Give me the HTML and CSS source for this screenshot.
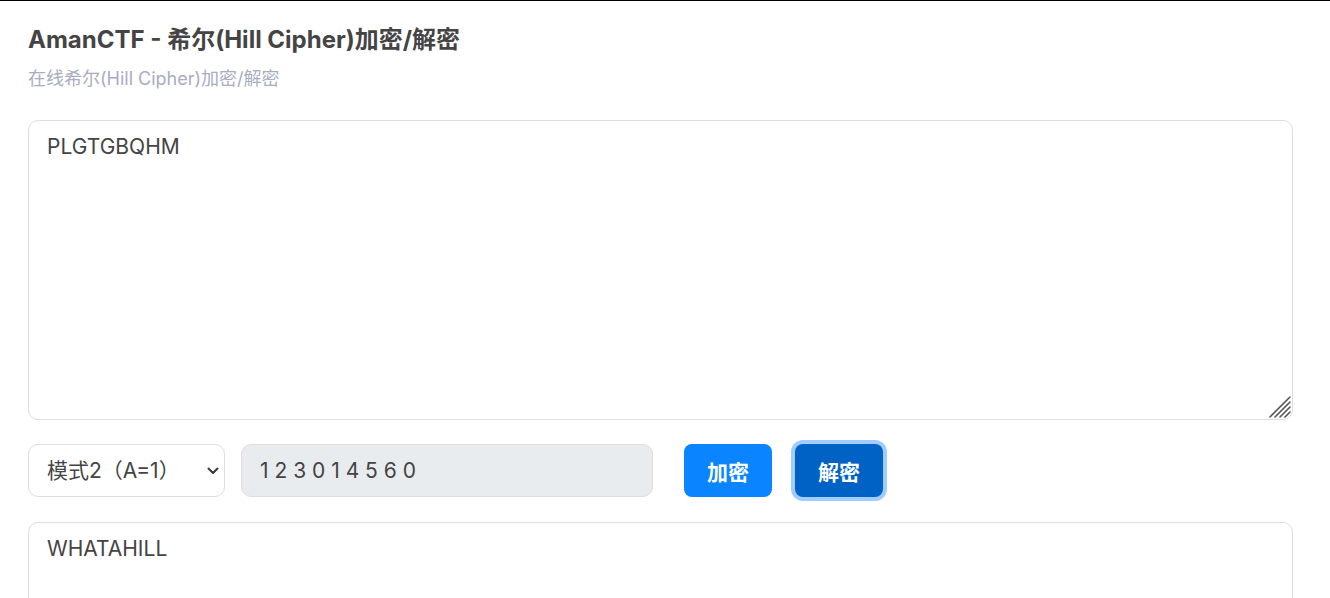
FILE: index.html
```html
<!DOCTYPE html>
<html lang="zh">
<head>
<meta charset="utf-8">
<title>AmanCTF - 希尔(Hill Cipher)加密/解密</title>
<link rel="stylesheet" href="styles.css">
</head>
<body>
<div class="page">
  <h1 class="title">AmanCTF - 希尔(Hill Cipher)加密/解密</h1>
  <p class="subtitle">在线希尔(Hill Cipher)加密/解密</p>
  <div class="box-wrap">
    <textarea class="box box-in">PLGTGBQHM</textarea>
    <svg class="grip" width="22" height="22" viewBox="0 0 22 22"><g stroke="#555" stroke-width="1.6" stroke-linecap="round"><path d="M1 21 L21 1"/><path d="M6 21 L21 6"/><path d="M11 21 L21 11"/><path d="M16 21 L21 16"/></g></svg>
  </div>
  <div class="controls">
    <div class="select-wrap">
      <select class="select">
        <option>模式2（A=1）</option>
      </select>
      <svg class="chev" width="12" height="8" viewBox="0 0 12 8"><path d="M1.5 1.5 L6 6 L10.5 1.5" fill="none" stroke="#343a40" stroke-width="2" stroke-linecap="round" stroke-linejoin="round"/></svg>
    </div>
    <input class="key" type="text" value="1 2 3 0 1 4 5 6 0">
    <button class="btn btn-enc">加密</button>
    <button class="btn btn-dec">解密</button>
  </div>
  <textarea class="box box-out">WHATAHILL</textarea>
</div>
</body>
</html>
```
FILE: styles.css
```css
html, body {
  margin: 0;
  padding: 0;
  background: #fff;
}
body {
  border-top: 1px solid #000;
  font-family: Inter, "Noto Sans CJK SC", sans-serif;
  color: #444;
}
.page {
  padding: 0 37px 0 28px;
}
.title {
  margin: 0;
  padding-top: 24px;
  font-size: 24px;
  font-weight: 700;
  line-height: 30px;
  color: #444;
}
.subtitle {
  margin: 12px 0 0;
  font-size: 18px;
  line-height: 24px;
  color: #a8adc2;
}
.box-wrap {
  position: relative;
  margin-top: 29px;
}
.box {
  display: block;
  box-sizing: border-box;
  width: 100%;
  border: 1px solid #dedede;
  border-radius: 10px;
  padding: 13px 18px;
  font-family: Inter, "Noto Sans CJK SC", sans-serif;
  font-size: 21px;
  line-height: 26px;
  color: #444;
  background: #fff;
  outline: none;
  resize: none;
}
.box-in {
  height: 300px;
}
.grip {
  position: absolute;
  right: 2px;
  bottom: 2px;
  pointer-events: none;
}
.box-out {
  margin-top: 25px;
  height: 200px;
}
.controls {
  display: flex;
  align-items: center;
  margin-top: 24px;
  height: 53px;
}
.select-wrap {
  position: relative;
  width: 197px;
  height: 53px;
}
.select {
  appearance: none;
  -webkit-appearance: none;
  box-sizing: border-box;
  width: 100%;
  height: 100%;
  border: 1px solid #dedede;
  border-radius: 10px;
  background: #fff;
  padding: 0 18px;
  font-family: Inter, "Noto Sans CJK SC", sans-serif;
  font-size: 21px;
  color: #444;
}
.chev {
  position: absolute;
  right: 6px;
  top: 23px;
  pointer-events: none;
}
.key {
  box-sizing: border-box;
  width: 412px;
  height: 53px;
  margin-left: 16px;
  border: 1px solid #dedede;
  border-radius: 10px;
  background: #e9ecef;
  padding: 0 18px;
  font-family: Inter, "Noto Sans CJK SC", sans-serif;
  font-size: 21px;
  color: #444;
  outline: none;
}
.btn {
  box-sizing: border-box;
  width: 88px;
  height: 53px;
  border: none;
  border-radius: 8px;
  color: #fff;
  font-family: Inter, "Noto Sans CJK SC", sans-serif;
  font-size: 21px;
  font-weight: 700;
}
.btn-enc {
  margin-left: 31px;
  background: #0a84ff;
}
.btn-dec {
  margin-left: 23px;
  background: #0062c4;
  box-shadow: 0 0 0 4px #9fcdff;
}
```
